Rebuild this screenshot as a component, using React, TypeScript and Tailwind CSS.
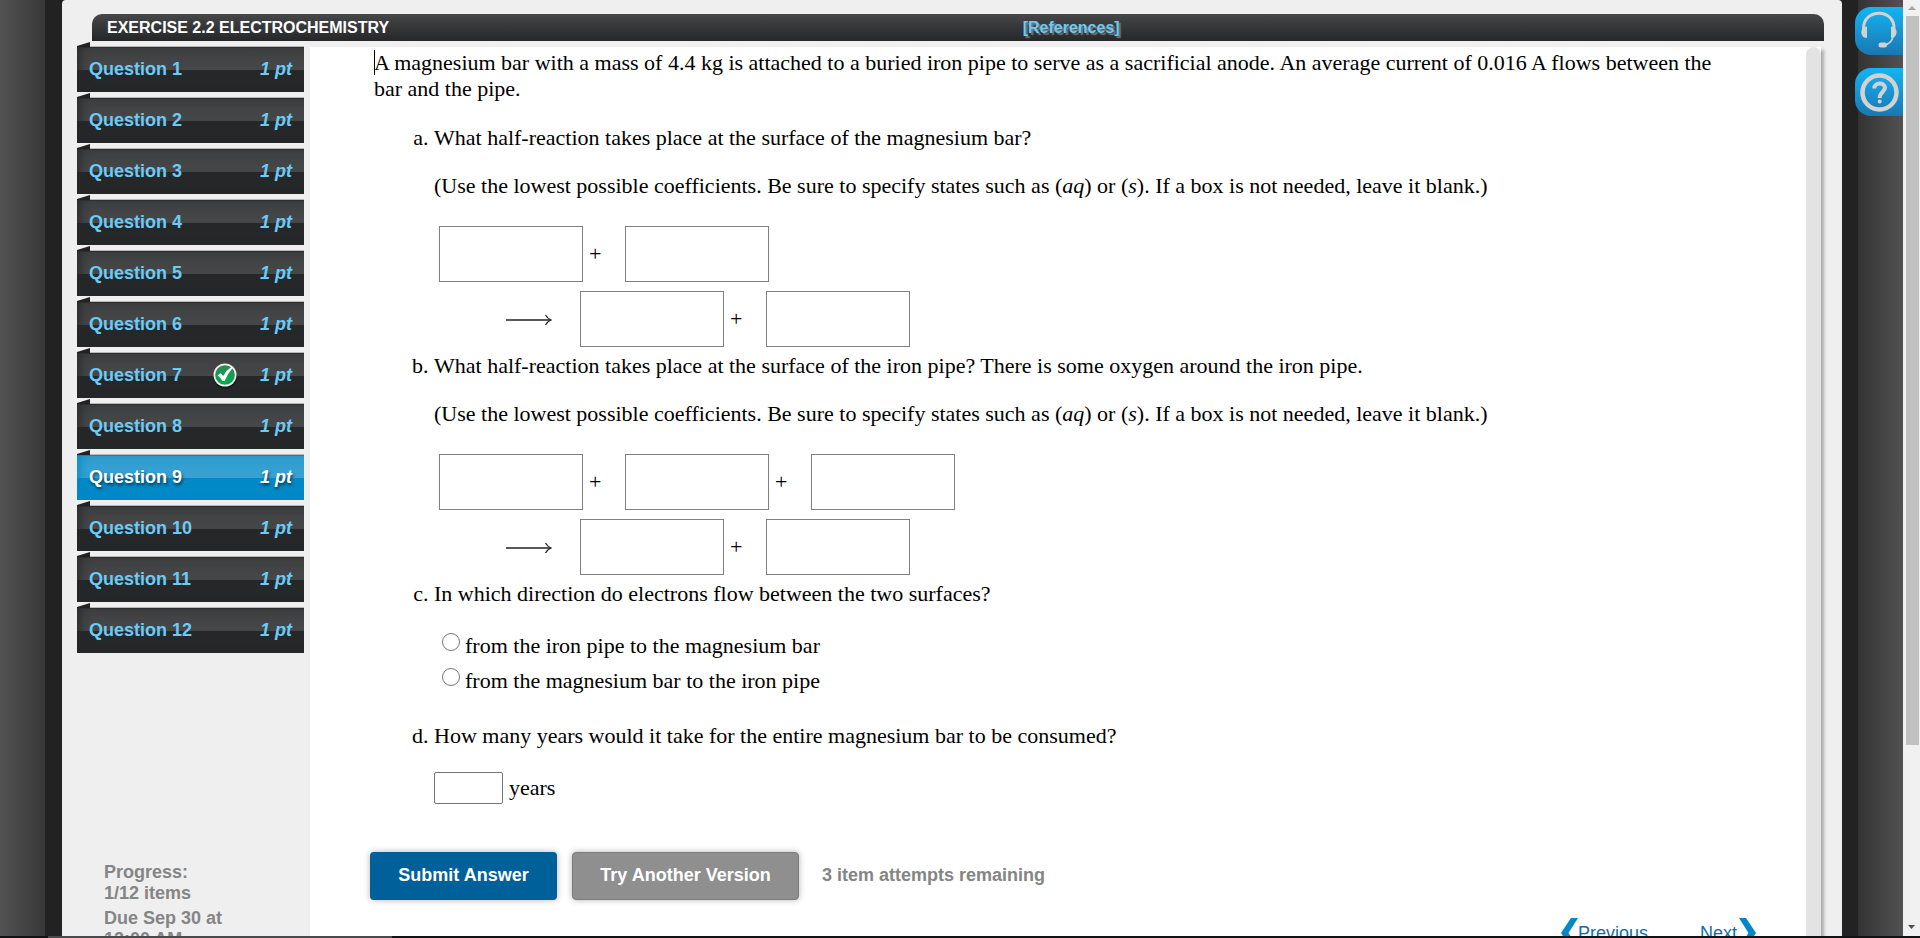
import React from "react";

const questions = Array.from({ length: 12 }, (_, i) => i + 1);
const CURRENT = 9;
const DONE = 7;

function CheckBadge() {
  return (
    <svg viewBox="0 0 26 28" className="h-7 w-[26px]" role="img" aria-label="Completed">
      <defs>
        <radialGradient id="badge" cx="0.5" cy="0.85" r="0.8">
          <stop offset="0" stopColor="#00b050" />
          <stop offset="1" stopColor="#2a8a55" />
        </radialGradient>
      </defs>
      <circle cx="13" cy="16" r="11.8" fill="#000" opacity="0.35" />
      <circle cx="13" cy="14" r="11.5" fill="#f1f1ee" />
      <circle cx="13" cy="14" r="9.8" fill="url(#badge)" />
      <path d="M5.600 14.200 L8.800 12.200 L11.200 15 Q14.500 9 20 5.600 L21 6.600 Q15.600 12.600 12.600 20 L10.600 20 Q8.600 16.600 5.600 14.200Z" fill="#fff" />
    </svg>
  );
}

function QuestionItem({ n }: { n: number }) {
  const current = n === CURRENT;
  return (
    <li className="pb-px">
      <svg viewBox="0 0 13 5" className="relative block h-[5px] w-[13px]" aria-hidden="true">
        <path d="M0 5 L0 4 L13 0 L13 5Z" fill="#222" />
      </svg>
      <a
        href={`#question-${n}`}
        aria-current={current ? "page" : undefined}
        className={
          current
            ? "flex h-[45px] items-center border-t border-[#1b7db2] bg-linear-to-b from-[#2f9ccf] from-0% via-[#38a2d3] via-50% to-[#0088c7] to-50% pr-3 pb-[2px] pl-3 text-white shadow-[0_-1px_0_#b8b8b8,inset_8px_0_12px_-6px_#0088c7] [text-shadow:1px_2px_3px_rgba(0,0,0,0.6)]"
            : "flex h-[45px] items-center border-t border-[#2e2e30] bg-linear-to-b from-[#3f4041] from-0% via-[#464748] via-50% to-[#262729] to-50% pr-3 pb-[2px] pl-3 text-[#6bcbf7] shadow-[0_-1px_0_#b8b8b8,inset_8px_0_12px_-6px_#262729]"
        }
      >
        <span className="flex-1">Question {n}</span>
        {n === DONE && (
          <span className="mr-[22px]">
            <CheckBadge />
          </span>
        )}
        <span className="italic">1 pt</span>
      </a>
    </li>
  );
}

function FormulaBox({ label }: { label: string }) {
  return <input type="text" aria-label={label} className="h-14 w-36 border border-[#808080] bg-white px-2 outline-none" />;
}

function BoxRow({ count, name }: { count: number; name: string }) {
  return (
    <>
      {Array.from({ length: count }, (_, i) => (
        <React.Fragment key={i}>
          {i > 0 && <span className="w-[42px] pl-[6px]">+</span>}
          <FormulaBox label={`${name} ${i + 1}`} />
        </React.Fragment>
      ))}
    </>
  );
}

function Equation({ left }: { left: number }) {
  return (
    <div className="mt-[27px] flex flex-col gap-[9px] pl-[5px]">
      <div className="flex items-center">
        <BoxRow count={left} name="Reactant" />
      </div>
      <div className="flex items-center pl-[67px]">
        <svg viewBox="0 0 46 12" className="mr-7 h-3 w-[46px]" role="img" aria-label="yields">
          <path d="M0 7 H45" stroke="#222" strokeWidth="1.6" fill="none" />
          <path d="M39.5 2 Q41.5 5.5 45 7 Q41.5 8.5 39.5 12" stroke="#222" strokeWidth="1.3" fill="none" />
        </svg>
        <BoxRow count={2} name="Product" />
      </div>
    </div>
  );
}

function Instructions() {
  return (
    <p className="mt-[22px]">
      (Use the lowest possible coefficients. Be sure to specify states such as (<i>aq</i>) or (<i>s</i>). If a box is not
      needed, leave it blank.)
    </p>
  );
}

function HelpButtons() {
  return (
    <div className="absolute top-[7px] right-[17px] flex flex-col gap-[13px]">
      <button type="button" aria-label="Support" className="h-12 w-12 rounded-l-2xl bg-linear-to-b from-[#12b4f5] to-[#1878b2]">
        <svg viewBox="0 0 48 48" className="h-12 w-12" fill="none" stroke="#d2d2d2">
          <path d="M8.500 22 C8 1 40 1 39 22" strokeWidth="3" />
          <path d="M12 19.500 C4.500 19.500 4.500 31 12 31Z M36 19.500 C43.500 19.500 43.500 31 36 31Z" fill="#d2d2d2" stroke="none" />
          <path d="M38 30 Q36 37 29 38" strokeWidth="1.600" />
          <rect x="23.500" y="35.500" width="8.500" height="5" rx="2.500" fill="#d2d2d2" stroke="none" />
        </svg>
      </button>
      <button type="button" aria-label="Help" className="h-12 w-12 rounded-l-2xl bg-linear-to-b from-[#12b4f5] to-[#1878b2]">
        <svg viewBox="0 0 48 48" className="h-12 w-12" fill="none" stroke="#d2d2d2">
          <circle cx="24.500" cy="24.500" r="17" strokeWidth="4.500" />
          <path d="M19.300 20.500 C19.300 14 30 14 30 19.800 C30 24 24.700 23.500 24.700 30" strokeWidth="4" />
          <circle cx="24.700" cy="33.500" r="2" fill="#d2d2d2" stroke="none" />
        </svg>
      </button>
    </div>
  );
}

function WindowScrollbar() {
  return (
    <div className="flex w-[17px] flex-col items-center bg-[#f1f1f1] pl-[2px]" aria-hidden="true">
      <svg viewBox="0 0 15 16" className="h-4 w-[15px] shrink-0">
        <path d="M3 10 L7 6 L11 10Z" fill="#a3a3a3" />
      </svg>
      <div className="w-[13px] grow-[729] bg-[#c1c1c1]" />
      <div className="grow-[175]" />
      <svg viewBox="0 0 15 16" className="h-4 w-[15px] shrink-0">
        <path d="M3 5 L10 5 L6.5 9Z" fill="#505050" />
      </svg>
    </div>
  );
}

export default function App() {
  return (
    <div className="flex h-screen flex-col overflow-hidden bg-[#121214] font-['Liberation_Sans',Arial,sans-serif]">
      <div className="relative flex min-h-0 flex-1">
        <div className="w-[45px] bg-linear-to-r from-[#525252] to-[#383838]" />
        <div className="flex min-w-0 flex-1 overflow-hidden bg-[#222] pr-4 pl-[17px]">
          <div className="flex min-w-0 flex-1 flex-col rounded-t-[4px] bg-[#efefef] pt-[14px] pr-[18px] pl-[15px]">
            <header className="relative z-10 ml-[15px] grid h-[27px] grid-cols-[13fr_auto_10fr] items-center rounded-t-[10px] bg-linear-to-b from-[#464748] to-[#262729] pl-[15px] text-base font-bold">
              <h1 className="text-white">EXERCISE 2.2 ELECTROCHEMISTRY</h1>
              <a href="#references" className="text-[#6bcbf7] [text-shadow:2px_2px_1px_#777]">
                [References]
              </a>
            </header>
            <div className="flex min-h-0 flex-1">
              <aside className="flex w-[233px] shrink-0 flex-col pr-[6px]">
                <ul className="pt-px text-lg font-bold">
                  {questions.map((n) => (
                    <QuestionItem key={n} n={n} />
                  ))}
                </ul>
                <div className="mt-52 h-[75px] w-[150px] pl-[27px] text-lg leading-[21px] font-bold text-[#858585]">
                  <p>
                    Progress:
                    <br />
                    1/12 items
                  </p>
                  <p className="mt-1">Due Sep 30 at 12:00 AM</p>
                </div>
              </aside>
              <div className="mt-[6px] mr-[3px] flex min-w-0 flex-1 bg-white shadow-[3px_3px_3px_#aaa]">
                <main className="min-w-0 flex-1 pt-[3px] pr-[50px] pl-[60px]">
                  <div className="pr-4 pl-1 font-['Liberation_Serif','Times_New_Roman',serif] text-[22px] leading-[26px] text-black">
                    <p className="relative">
                      <span className="absolute top-0 left-0 h-[25px] w-px bg-black" />A magnesium bar with a mass of 4.4 kg is
                      attached to a buried iron pipe to serve as a sacrificial anode. An average current of 0.016 A flows between
                      the bar and the pipe.
                    </p>
                    <ol className="mt-[23px] list-[lower-alpha] pl-[60px]">
                      <li>
                        <p>What half-reaction takes place at the surface of the magnesium bar?</p>
                        <Instructions />
                        <Equation left={2} />
                      </li>
                      <li className="mt-[6px]">
                        <p>
                          What half-reaction takes place at the surface of the iron pipe? There is some oxygen around the iron pipe.
                        </p>
                        <Instructions />
                        <Equation left={3} />
                      </li>
                      <li className="mt-[6px]">
                        <p>In which direction do electrons flow between the two surfaces?</p>
                        <div className="mt-[26px] flex flex-col gap-[9px] pl-2">
                          <label className="flex items-start gap-[5px]">
                            <input type="radio" name="direction" className="h-[18px] w-[18px]" />
                            from the iron pipe to the magnesium bar
                          </label>
                          <label className="flex items-start gap-[5px]">
                            <input type="radio" name="direction" className="h-[18px] w-[18px]" />
                            from the magnesium bar to the iron pipe
                          </label>
                        </div>
                      </li>
                      <li className="mt-[29px]">
                        <label htmlFor="years">How many years would it take for the entire magnesium bar to be consumed?</label>
                        <div className="mt-[23px] flex items-center gap-[6px]">
                          <input id="years" type="text" className="h-8 w-[69px] rounded-[2px] border border-[#767676] px-1" />
                          years
                        </div>
                      </li>
                    </ol>
                  </div>
                  <div className="mt-12 flex items-center text-lg font-bold">
                    <button type="button" className="h-12 w-[187px] rounded-[4px] bg-[#006099] pb-[2px] text-white shadow-[0_0_6px_rgba(0,0,0,0.3)]">
                      Submit Answer
                    </button>
                    <button type="button" className="ml-[15px] h-12 w-[227px] rounded-[4px] border border-[#7c7c7c] bg-[#8f8f8f] pb-[2px] text-white shadow-[0_0_6px_rgba(0,0,0,0.3)]">
                      Try Another Version
                    </button>
                    <span className="ml-[23px] pb-[2px] text-[#858585]">3 item attempts remaining</span>
                  </div>
                  <nav className="mt-[18px] flex h-[30px] justify-end gap-[52px] text-lg text-[#0f6ea5]">
                    <a href="#previous" className="flex">
                      <svg viewBox="0 0 17 30" className="h-[30px] w-[17px]" fill="#0088c7">
                        <path d="M10 0 H17 L7.500 15 L17 30 H10 L0 15Z" />
                      </svg>
                      <span className="pt-px">Previous</span>
                    </a>
                    <a href="#next" className="flex gap-[2px]">
                      <span className="pt-px">Next</span>
                      <svg viewBox="0 0 17 30" className="h-[30px] w-[17px]" fill="#0088c7">
                        <path d="M7 0 H0 L9.500 15 L0 30 H7 L17 15Z" />
                      </svg>
                    </a>
                  </nav>
                </main>
                <div className="w-[15px] rounded-t-full bg-[#e3e3e3]" />
              </div>
            </div>
          </div>
        </div>
        <div className="w-[45px] bg-linear-to-r from-[#333] to-[#525252]" />
        <WindowScrollbar />
        <HelpButtons />
      </div>
      <div className="relative flex h-[2px] shrink-0 bg-[#121214]">
        <div className="ml-12 w-[344px] bg-[#4a4a4c]" />
      </div>
    </div>
  );
}
